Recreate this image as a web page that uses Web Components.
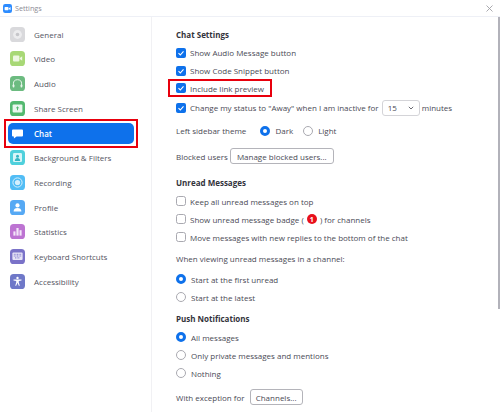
<!DOCTYPE html>
<html lang="en">
<head>
<meta charset="UTF-8">
<title>Settings</title>
<style>
html, body { margin: 0; height: 100%; background: #fff; overflow: hidden; }
body { font-family: "Open Sans", "Liberation Sans", sans-serif; font-size: 8px; color: #4a4a55; }
</style>
</head>
<body>
<zoom-settings>
  <title-bar slot="title">Settings</title-bar>
  <side-nav slot="nav">
    <nav-item icon="general">General</nav-item>
    <nav-item icon="video">Video</nav-item>
    <nav-item icon="audio">Audio</nav-item>
    <nav-item icon="share">Share Screen</nav-item>
    <nav-item icon="chat" active>Chat</nav-item>
    <nav-item icon="background">Background &amp; Filters</nav-item>
    <nav-item icon="recording">Recording</nav-item>
    <nav-item icon="profile">Profile</nav-item>
    <nav-item icon="statistics">Statistics</nav-item>
    <nav-item icon="keyboard">Keyboard Shortcuts</nav-item>
    <nav-item icon="accessibility">Accessibility</nav-item>
  </side-nav>

  <setting-group heading="Chat Settings" style="--row-gap:17.7px">
    <check-row checked>Show Audio Message button</check-row>
    <check-row checked>Show Code Snippet button</check-row>
    <check-row checked marked>Include link preview</check-row>
    <check-row checked style="margin-top:2px">Change my status to "Away" when I am inactive for <select-box>15</select-box> minutes</check-row>
    <line-row style="margin-top:5px">Left sidebar theme <radio-row checked style="margin-left:12px">Dark</radio-row><radio-row style="margin-left:10px">Light</radio-row></line-row>
    <line-row style="margin-top:8px">Blocked users <push-button style="margin-left:0;--pad:6px">Manage blocked users...</push-button></line-row>
  </setting-group>

  <setting-group heading="Unread Messages" style="--row-gap:18px;margin-top:9px">
    <check-row>Keep all unread messages on top</check-row>
    <check-row>Show unread message badge ( <red-badge>1</red-badge> ) for channels</check-row>
    <check-row>Move messages with new replies to the bottom of the chat</check-row>
    <line-row style="margin-top:3px">When viewing unread messages in a channel:</line-row>
    <radio-row checked style="margin-top:3px">Start at the first unread</radio-row>
    <radio-row>Start at the latest</radio-row>
  </setting-group>

  <setting-group heading="Push Notifications" style="--row-gap:18px;margin-top:4px">
    <radio-row checked>All messages</radio-row>
    <radio-row>Only private messages and mentions</radio-row>
    <radio-row>Nothing</radio-row>
    <line-row style="margin-top:6px">With exception for <push-button style="margin-left:3px;--pad:5px">Channels...</push-button></line-row>
  </setting-group>
</zoom-settings>

<script>
// small helper, every element just sets its shadow html once
class Base extends HTMLElement {
  constructor() {
    super();
    this.attachShadow({ mode: 'open' });
  }
  connectedCallback() {
    this.shadowRoot.innerHTML = this.markup();
  }
}

class ZoomSettings extends Base {
  markup() {
    return `<style>
      :host { display: grid; grid-template-columns: 151px 1fr; grid-template-rows: 17px 1fr; width: 500px; height: 412px; overflow: hidden; }
      .top { grid-column: 1 / 3; }
      .main { border-left: 1px solid #f1f1f4; padding: 9px 0 0 24px; position: relative; }
      .scroll { position: absolute; right: 0; top: 0; width: 2px; height: 292px; background: #b2b2ba; }
    </style>
    <div class="top"><slot name="title"></slot></div>
    <slot name="nav"></slot>
    <div class="main"><slot></slot><div class="scroll"></div></div>`;
  }
}

class TitleBar extends Base {
  markup() {
    return `<style>
      :host { display: flex; align-items: center; height: 16px; border-bottom: 1px solid #eef0f6; padding-left: 3px; color: #8c8c94; font-size: 7.2px; }
      svg { margin-right: 3px; }
      .x { margin-left: auto; margin-right: 7px; }
    </style>
    <svg width="9" height="9" viewBox="0 0 9 9"><rect width="9" height="9" rx="2.2" fill="#2d8cff"/><rect x="1.6" y="3" width="3.9" height="3.2" rx=".7" fill="#fff"/><path d="M5.9 4.2l1.6-1.1v3.1L5.9 5.1z" fill="#fff"/></svg>
    <slot></slot>
    <svg class="x" width="7" height="7" viewBox="0 0 7 7"><path d="M.5.5l6 6M6.5.5l-6 6" stroke="#a0a0a6" stroke-width=".9" fill="none"/></svg>`;
  }
}

class SideNav extends Base {
  markup() {
    return `<style>
      :host { display: flex; flex-direction: column; padding: 5px 0 0 8px; width: 126px; }
    </style><slot></slot>`;
  }
}

const ICONS = {
  general: ['#d9d9dc', '<circle cx="7.5" cy="7.5" r="4.4" fill="#ececee"/><circle cx="7.5" cy="7.5" r="1.8" fill="#c6c6ca"/>'],
  video: ['#a8d876', '<rect x="3" y="4.5" width="6.4" height="6" rx="1" fill="#eef7e2"/><path d="M9.8 7l2.4-1.7v4.4L9.8 8z" fill="#eef7e2"/>'],
  audio: ['#6cbb80', '<path d="M3.4 10.5V7.8a4.1 4.1 0 0 1 8.2 0v2.7" fill="none" stroke="#eaf6ec" stroke-width="1"/><rect x="2.7" y="8.6" width="1.7" height="2.9" rx=".7" fill="#eaf6ec"/><rect x="10.6" y="8.6" width="1.7" height="2.9" rx=".7" fill="#eaf6ec"/>'],
  share: ['#53b96f', '<rect x="2.6" y="3.4" width="9.8" height="8" rx="1" fill="#eaf7ee"/><path d="M7.5 5.2l1.7 2H8v2H7v-2H5.8z" fill="#53b96f"/>'],
  background: ['#4fd0dc', '<rect x="3" y="3" width="9" height="9" rx="1.2" fill="#d8f5f8"/><circle cx="7.5" cy="6.3" r="1.5" fill="#35b4c2"/><path d="M4.8 11c0-2 1.2-3 2.7-3s2.7 1 2.7 3z" fill="#35b4c2"/>'],
  recording: ['#52bdf5', '<circle cx="7.5" cy="7.5" r="4.6" fill="none" stroke="#d5f0fd" stroke-width="1"/><circle cx="7.5" cy="7.5" r="2.6" fill="#d5f0fd"/>'],
  profile: ['#56a9f4', '<circle cx="7.5" cy="5.4" r="2.1" fill="#fff"/><path d="M3.6 11.4c0-2.3 1.7-3.4 3.9-3.4s3.9 1.1 3.9 3.4z" fill="#fff"/>'],
  statistics: ['#bd74d2', '<rect x="3.4" y="7.4" width="2.1" height="4.2" fill="#f3e5f8"/><rect x="6.4" y="4" width="2.2" height="7.6" fill="#f3e5f8"/><rect x="9.5" y="6.2" width="2.1" height="5.4" fill="#f3e5f8"/>'],
  keyboard: ['#7a72c8', '<rect x="2.4" y="3.6" width="10.2" height="7.4" rx="1" fill="#e6e4f6"/><path d="M3.8 5.3h7.4M3.8 7h7.4M5 8.9h5" stroke="#7a72c8" stroke-width=".9" stroke-dasharray="1 .6" fill="none"/>'],
  accessibility: ['#6f78c8', '<circle cx="7.5" cy="3.9" r="1.2" fill="#fff"/><path d="M3.5 5.6h8v1l-2.7.5v1.4l1 3.2h-1l-1.3-3-1.3 3h-1l1-3.2V7.1l-2.7-.5z" fill="#fff"/>'],
  chat: [null, '<path d="M3 3.4h9a1 1 0 0 1 1 1v5.1a1 1 0 0 1-1 1H6.6l-2.7 2v-2H3a1 1 0 0 1-1-1V4.4a1 1 0 0 1 1-1z" fill="#fff"/>']
};

class NavItem extends Base {
  markup() {
    const [bg, inner] = ICONS[this.getAttribute('icon')];
    const plate = bg ? `<rect width="15" height="15" rx="3.6" fill="${bg}"/>` : '';
    return `<style>
      :host { display: block; height: 24.65px; color: #55555f; font-size: 8px; }
      :host([active]) { height: 21px; margin: 2px 0; color: #fff; font-weight: 600; outline: 2px solid #e8000d; outline-offset: 2px; }
      .row { display: flex; align-items: center; height: 100%; padding-left: 2px; border-radius: 5px; }
      :host([active]) .row { background: #0e71eb; }
      svg { margin-right: 9px; flex: none; }
    </style>
    <div class="row"><svg width="15" height="15" viewBox="0 0 15 15">${plate}${inner}</svg><slot></slot></div>`;
  }
}

class SettingGroup extends Base {
  markup() {
    return `<style>
      :host { display: block; }
      h3 { margin: 0; font-size: 8px; font-weight: 700; color: #33333b; height: 18px; line-height: 18px; }
      .rows { display: flex; flex-direction: column; }
      ::slotted(*) { min-height: var(--row-gap); }
    </style>
    <h3>${this.getAttribute('heading')}</h3><div class="rows"><slot></slot></div>`;
  }
}

class CheckRow extends Base {
  markup() {
    const tick = this.hasAttribute('checked')
      ? '<rect width="10" height="10" rx="2" fill="#0e71eb"/><path d="M2.5 5.2l1.8 1.8 3.2-3.7" stroke="#fff" stroke-width="1.1" fill="none"/>'
      : '<rect x=".5" y=".5" width="9" height="9" rx="2" fill="#fff" stroke="#a9a9b0"/>';
    return `<style>
      :host { display: flex; align-items: center; white-space: pre; }
      .in { display: inline-flex; align-items: center; }
      :host([marked]) .in { outline: 2px solid #e8000d; padding: 1.5px 6px; margin-left: -6px; }
      svg { margin-right: 4px; flex: none; }
    </style>
    <span class="in"><svg width="10" height="10" viewBox="0 0 10 10">${tick}</svg><slot></slot></span>`;
  }
}

class RadioRow extends Base {
  markup() {
    const dot = this.hasAttribute('checked')
      ? '<circle cx="5" cy="5" r="3.5" fill="#fff" stroke="#0e71eb" stroke-width="3"/>'
      : '<circle cx="5" cy="5" r="4.5" fill="#fff" stroke="#a9a9b0"/>';
    return `<style>
      :host { display: inline-flex; align-items: center; }
      svg { margin-right: 5px; flex: none; }
    </style><svg width="10" height="10" viewBox="0 0 10 10">${dot}</svg><slot></slot>`;
  }
}

class LineRow extends Base {
  markup() {
    return `<style>:host { display: flex; align-items: center; white-space: pre; }</style><slot></slot>`;
  }
}

class PushButton extends Base {
  markup() {
    return `<style>
      :host { display: inline-flex; align-items: center; height: 14px; padding: 0 var(--pad, 7px); border: 1px solid #b4b4ba; border-radius: 3px; background: #fff; }
    </style><slot></slot>`;
  }
}

class SelectBox extends Base {
  markup() {
    return `<style>
      :host { display: inline-flex; align-items: center; justify-content: space-between; box-sizing: border-box; width: 38px; height: 16px; padding: 0 5px; margin: 0 0 0 1px; border: 1px solid #d4d4d8; border-radius: 3px; }
    </style><slot></slot><svg width="6" height="4" viewBox="0 0 6 4"><path d="M.8.8L3 3l2.2-2.2" stroke="#6a6a72" fill="none"/></svg>`;
  }
}

class RedBadge extends Base {
  markup() {
    return `<style>
      :host { display: inline-flex; align-items: center; justify-content: center; width: 10px; height: 10px; margin: 0 1px; border-radius: 50%; background: #e8101c; color: #fff; font-size: 7px; font-weight: 700; }
    </style><slot></slot>`;
  }
}

customElements.define('zoom-settings', ZoomSettings);
customElements.define('title-bar', TitleBar);
customElements.define('side-nav', SideNav);
customElements.define('nav-item', NavItem);
customElements.define('setting-group', SettingGroup);
customElements.define('check-row', CheckRow);
customElements.define('radio-row', RadioRow);
customElements.define('line-row', LineRow);
customElements.define('push-button', PushButton);
customElements.define('select-box', SelectBox);
customElements.define('red-badge', RedBadge);
</script>
</body>
</html>
